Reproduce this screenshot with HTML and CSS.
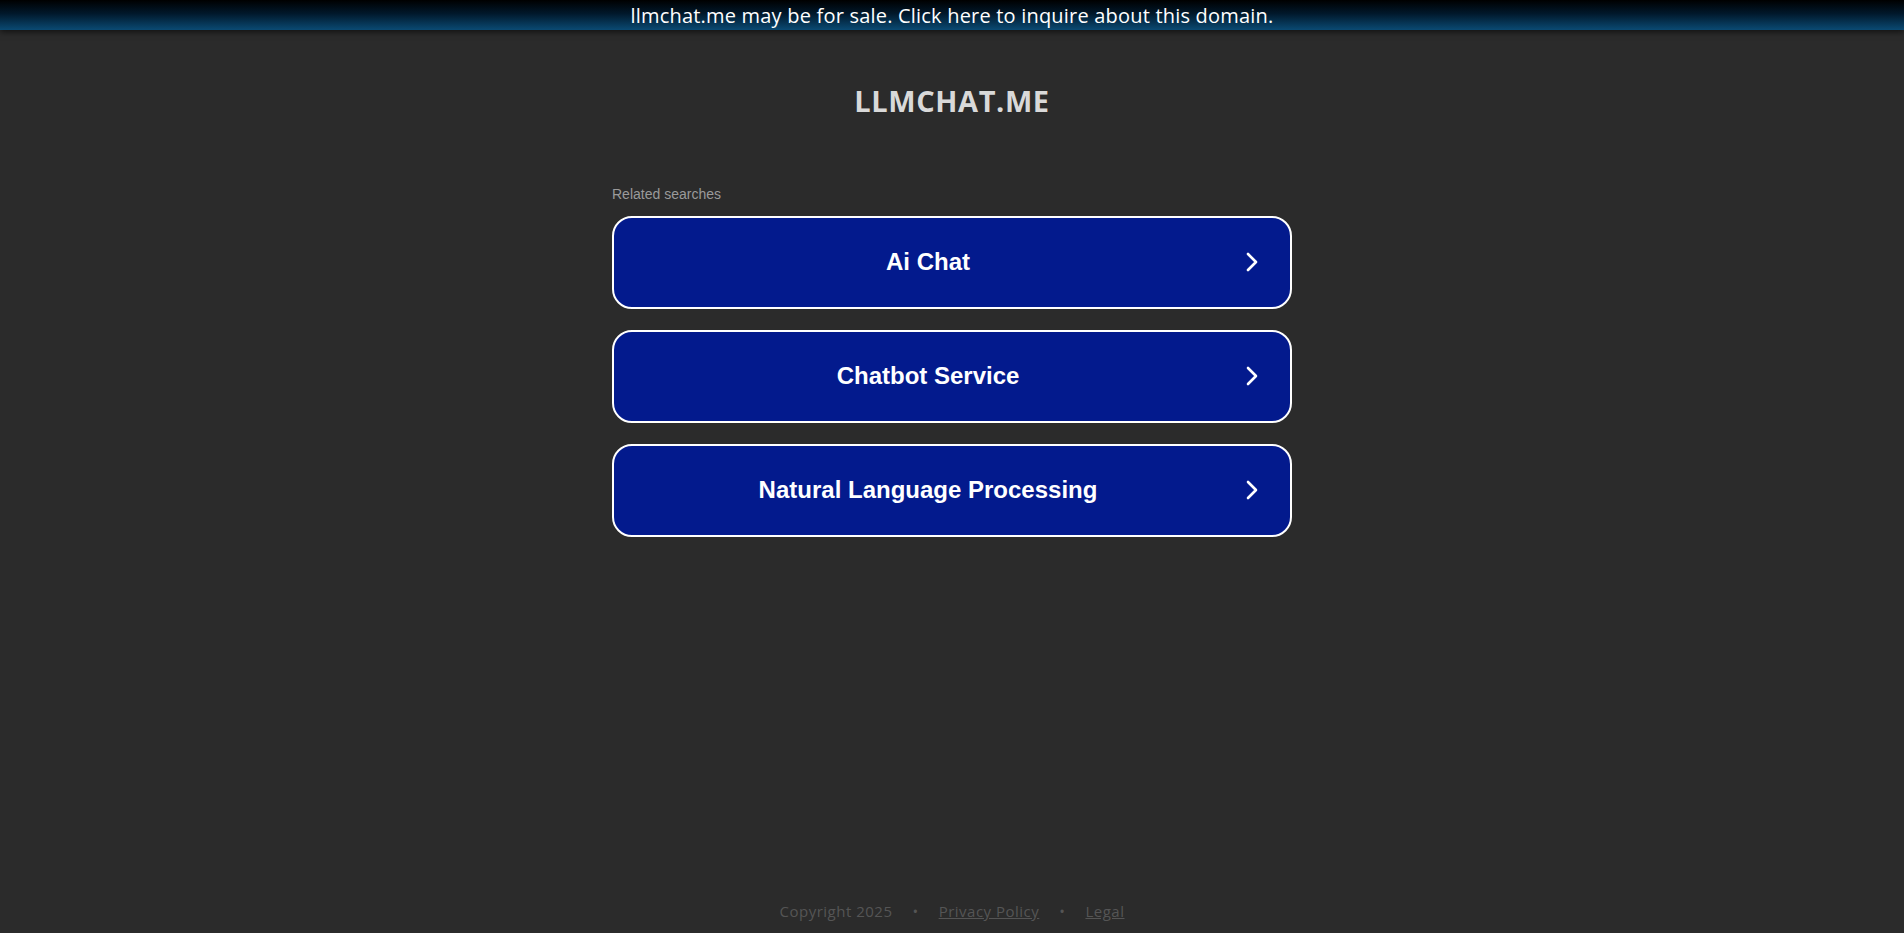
FILE: index.html
```html
<!DOCTYPE html>
<html lang="en">
<head>
  <meta charset="UTF-8" />
  <meta name="viewport" content="width=device-width, initial-scale=1.0"/>
  <title>llmchat.me</title>
  <link rel="stylesheet" href="styles.css">
</head>
<body>

<div class="sale-bar">
  <a href="#">llmchat.me may be for sale. Click here to inquire about this domain.</a>
</div>

<div class="page">
  <h1 class="domain">LLMCHAT.ME</h1>

  <div class="related">
    <div class="related-title">Related searches</div>

    <a class="search-link" href="#">
      <span>Ai Chat</span>
      <svg class="chevron" viewBox="0 0 12 20" width="12" height="20"><path d="M2 2 L10 10 L2 18" /></svg>
    </a>
    <a class="search-link" href="#">
      <span>Chatbot Service</span>
      <svg class="chevron" viewBox="0 0 12 20" width="12" height="20"><path d="M2 2 L10 10 L2 18" /></svg>
    </a>
    <a class="search-link" href="#">
      <span>Natural Language Processing</span>
      <svg class="chevron" viewBox="0 0 12 20" width="12" height="20"><path d="M2 2 L10 10 L2 18" /></svg>
    </a>
  </div>
</div>

<div class="footer">
  <span>Copyright 2025</span>
  <span class="dot">•</span>
  <a href="#">Privacy Policy</a>
  <span class="dot">•</span>
  <a href="#">Legal</a>
</div>

</body>
</html>
```

FILE: styles.css
```css
* {
  box-sizing: border-box;
}

body {
  margin: 0;
  padding: 0;
  background: #2b2b2b;
  height: 100vh;
  display: flex;
  flex-direction: column;
  font-family: 'Open Sans', sans-serif;
}

.sale-bar {
  height: 30px;
  background: linear-gradient(to bottom, #000000 0%, #01182b 45%, #0a4a73 100%);
  box-shadow: 0 2px 6px rgba(0, 0, 0, 0.6);
  display: flex;
  justify-content: center;
  align-items: center;
}

.sale-bar a {
  color: #ffffff;
  text-decoration: none;
  font-size: 20px;
  letter-spacing: 0.2px;
}

.page {
  flex: 1;
  display: flex;
  flex-direction: column;
  align-items: center;
}

.domain {
  margin: 54px 0 0;
  color: #d9d9d9;
  font-size: 29px;
  font-weight: 700;
  letter-spacing: 0.6px;
  line-height: 1.2;
}

.related {
  width: 680px;
  margin-top: 67px;
  display: flex;
  flex-direction: column;
  gap: 21px;
}

.related-title {
  font-family: 'Liberation Sans', Arial, sans-serif;
  color: #9a9a9a;
  font-size: 14px;
  margin-bottom: -7px;
}

.search-link {
  height: 93px;
  padding-right: 48px;
  border: 2px solid #ffffff;
  border-radius: 20px;
  background: #031a8d;
  color: #ffffff;
  text-decoration: none;
  font-family: 'Liberation Sans', Arial, sans-serif;
  font-weight: 700;
  font-size: 24px;
  display: flex;
  align-items: center;
  justify-content: center;
  position: relative;
}

.chevron {
  position: absolute;
  right: 32px;
  top: 50%;
  margin-top: -10px;
  fill: none;
  stroke: #ffffff;
  stroke-width: 2.6;
  stroke-linecap: round;
  stroke-linejoin: round;
}

.footer {
  display: flex;
  justify-content: center;
  align-items: center;
  gap: 20px;
  padding-bottom: 12px;
  color: #555555;
  font-size: 15px;
  letter-spacing: 0.5px;
}

.footer a {
  color: #555555;
}
```
